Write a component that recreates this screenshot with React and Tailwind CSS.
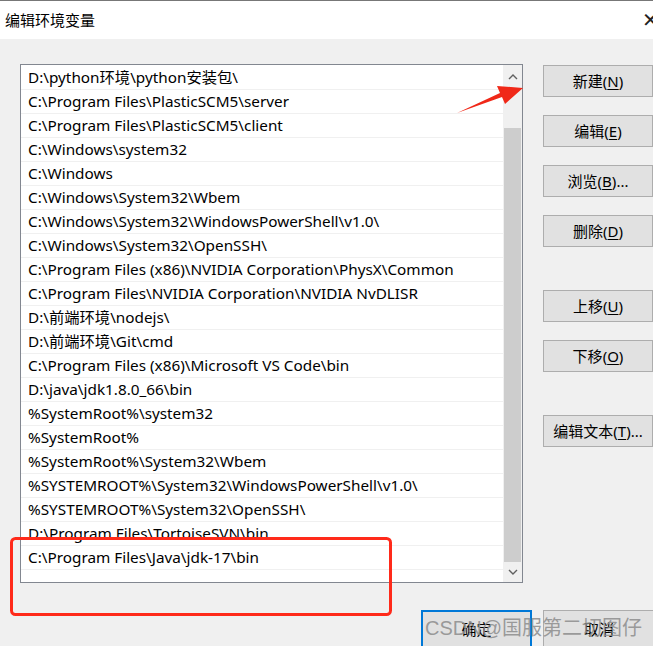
import React from 'react';

const paths = [
    'D:\\python环境\\python安装包\\',
    'C:\\Program Files\\PlasticSCM5\\server',
    'C:\\Program Files\\PlasticSCM5\\client',
    'C:\\Windows\\system32',
    'C:\\Windows',
    'C:\\Windows\\System32\\Wbem',
    'C:\\Windows\\System32\\WindowsPowerShell\\v1.0\\',
    'C:\\Windows\\System32\\OpenSSH\\',
    'C:\\Program Files (x86)\\NVIDIA Corporation\\PhysX\\Common',
    'C:\\Program Files\\NVIDIA Corporation\\NVIDIA NvDLISR',
    'D:\\前端环境\\nodejs\\',
    'D:\\前端环境\\Git\\cmd',
    'C:\\Program Files (x86)\\Microsoft VS Code\\bin',
    'D:\\java\\jdk1.8.0_66\\bin',
    '%SystemRoot%\\system32',
    '%SystemRoot%',
    '%SystemRoot%\\System32\\Wbem',
    '%SYSTEMROOT%\\System32\\WindowsPowerShell\\v1.0\\',
    '%SYSTEMROOT%\\System32\\OpenSSH\\',
    'D:\\Program Files\\TortoiseSVN\\bin',
    'C:\\Program Files\\Java\\jdk-17\\bin',
];

function Btn({ label, mn, tail = '', className = '' }) {
    return (
        <div className={`w-[110px] h-[32px] shrink-0 border border-[#adadad] bg-[#e1e1e1] flex items-center justify-center text-[15px] text-black ${className}`}>
            {label}(<span className="underline underline-offset-2">{mn}</span>){tail}
        </div>
    );
}

export default function App() {
    return (
        <div className="relative w-[653px] h-[646px] overflow-hidden bg-[#f0f0f0] text-black" style={{ fontFamily: '"Noto Sans", "Noto Sans CJK SC", sans-serif' }}>
            {/* title bar */}
            <div className="h-[39px] bg-white border-t border-[#777] flex items-center justify-between pl-[5px]">
                <span className="text-[15px]">编辑环境变量</span>
                <span className="text-[20px] font-light mr-[-6px] text-[#222]">✕</span>
            </div>

            <div className="flex pt-[25px] pl-[20px] gap-[20px]">
                {/* list */}
                <div className="w-[503px] h-[519px] border border-[#828790] bg-white flex">
                    <div className="flex-1 pt-[1px] overflow-hidden">
                        {paths.map((p) => (
                            <div key={p} className="h-[24px] border-b border-[#f0f0f0] pl-[7px] flex items-center text-[15.3px] whitespace-nowrap leading-none">
                                {p}
                            </div>
                        ))}
                    </div>
                    <div className="w-[19px] bg-[#f0f0f0] flex flex-col items-center">
                        <div className="h-[24px] w-full flex items-center justify-center">
                            <svg width="10" height="6" viewBox="0 0 10 6"><path d="M1 5 L5 1 L9 5" fill="none" stroke="#606060" strokeWidth="1.4" /></svg>
                        </div>
                        <div className="h-[39px]" />
                        <div className="w-[17px] h-[434px] bg-[#cdcdcd]" />
                        <div className="flex-1 w-full flex items-center justify-center">
                            <svg width="10" height="6" viewBox="0 0 10 6"><path d="M1 1 L5 5 L9 1" fill="none" stroke="#606060" strokeWidth="1.4" /></svg>
                        </div>
                    </div>
                </div>

                {/* right buttons */}
                <div className="flex flex-col pt-[1px]">
                    <Btn label="新建" mn="N" />
                    <Btn label="编辑" mn="E" className="mt-[18px]" />
                    <Btn label="浏览" mn="B" tail="..." className="mt-[18px]" />
                    <Btn label="删除" mn="D" className="mt-[18px]" />
                    <Btn label="上移" mn="U" className="mt-[43px]" />
                    <Btn label="下移" mn="O" className="mt-[18px]" />
                    <Btn label="编辑文本" mn="T" tail="..." className="mt-[43px]" />
                </div>
            </div>

            {/* bottom buttons */}
            <div className="flex justify-end gap-[11px] mt-[27px] mr-[-2px]">
                <div className="w-[111px] h-[38px] border-2 border-[#0078d7] bg-[#e1e1e1] flex items-center justify-center text-[15px]">确定</div>
                <div className="w-[112px] h-[38px] border border-[#adadad] bg-[#e1e1e1] flex items-center justify-center text-[15px]">取消</div>
            </div>

            {/* annotations */}
            <svg className="absolute left-0 top-0 pointer-events-none" width="653" height="646">
                <polygon points="457,113 500,93 497,86 523,88 505,104 502,97" fill="#f02818" />
                <rect x="11.5" y="538.5" width="379" height="76" rx="4" fill="none" stroke="#ff2a1a" strokeWidth="3" />
            </svg>
            <div className="absolute left-[425px] top-[613px] text-[20px] text-[rgba(140,140,140,0.85)] whitespace-nowrap pointer-events-none" style={{ fontFamily: '"Liberation Sans", "Noto Sans CJK SC", sans-serif' }}>
                CSDN@国服第二切图仔
            </div>
        </div>
    );
}
